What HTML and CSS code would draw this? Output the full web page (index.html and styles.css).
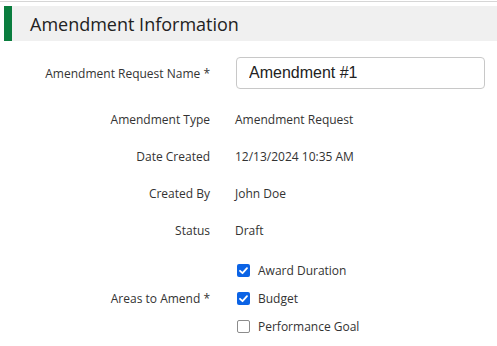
FILE: index.html
```html
<!DOCTYPE html>
<html>
<head>
<meta charset="utf-8">
<link rel="stylesheet" href="styles.css">
</head>
<body>
<div class="topline"></div>
<div class="section-header"><h2>Amendment Information</h2></div>
<div class="form">
  <label class="lbl row-input">Amendment Request Name *</label>
  <div class="val row-input"><input class="text-input" type="text" value="Amendment #1"></div>

  <div class="lbl row">Amendment Type</div>
  <div class="val row">Amendment Request</div>

  <div class="lbl row">Date Created</div>
  <div class="val row">12/13/2024 10:35 AM</div>

  <div class="lbl row">Created By</div>
  <div class="val row">John Doe</div>

  <div class="lbl row">Status</div>
  <div class="val row">Draft</div>

  <div class="lbl areas">Areas to Amend *</div>
  <div class="val checks">
    <label class="check"><span class="box checked"><svg viewBox="0 0 13 13" width="13" height="13"><path d="M3 6.8 L5.5 9.2 L10 4.2" fill="none" stroke="#fff" stroke-width="1.8" stroke-linecap="round" stroke-linejoin="round"/></svg></span>Award Duration</label>
    <label class="check"><span class="box checked"><svg viewBox="0 0 13 13" width="13" height="13"><path d="M3 6.8 L5.5 9.2 L10 4.2" fill="none" stroke="#fff" stroke-width="1.8" stroke-linecap="round" stroke-linejoin="round"/></svg></span>Budget</label>
    <label class="check"><span class="box"></span>Performance Goal</label>
  </div>
</div>
</body>
</html>
```

FILE: styles.css
```css
html, body {
  margin: 0;
  padding: 0;
  background: #fff;
}
body {
  font-family: "Open Sans", "Noto Sans", sans-serif;
  color: #333;
  font-size: 12px;
  width: 497px;
  height: 346px;
  overflow: hidden;
}
.topline {
  height: 1px;
  margin-top: 1px;
  background: #d6d6d6;
}
.section-header {
  margin: 4px 0 0 4px;
  height: 35px;
  border-left: 8px solid #0a7d3e;
  background: #f0f0f0;
  display: flex;
  align-items: center;
}
.section-header h2 {
  margin: 0 0 0 18px;
  font-size: 18px;
  font-weight: 400;
  color: #222;
}
.form {
  display: grid;
  grid-template-columns: 210px 1fr;
  column-gap: 25px;
  margin-top: 16px;
}
.lbl {
  text-align: right;
  display: flex;
  align-items: center;
  justify-content: flex-end;
  color: #333;
}
.val {
  display: flex;
  align-items: center;
  color: #333;
}
.row-input {
  height: 32px;
  margin-bottom: 11.5px;
}
.text-input {
  box-sizing: border-box;
  width: 249px;
  height: 32px;
  margin-left: 1px;
  border: 1px solid #c8c8c8;
  border-radius: 4px;
  padding: 0 12px;
  font-family: "Liberation Sans", Arial, sans-serif;
  font-size: 16px;
  color: #222;
  outline: none;
}
.row {
  height: 37px;
}
.areas {
  margin-top: 7.5px;
  height: 84px;
}
.checks {
  margin-top: 7.5px;
  flex-direction: column;
  align-items: flex-start;
}
.check {
  height: 28px;
  display: flex;
  align-items: center;
  gap: 8px;
}
.box {
  box-sizing: border-box;
  width: 13px;
  height: 13px;
  margin-left: 2px;
  border: 1.5px solid #8c8c8c;
  border-radius: 2px;
  background: #fff;
  display: inline-flex;
}
.box.checked {
  border: none;
  background: #0b63e5;
}
```
